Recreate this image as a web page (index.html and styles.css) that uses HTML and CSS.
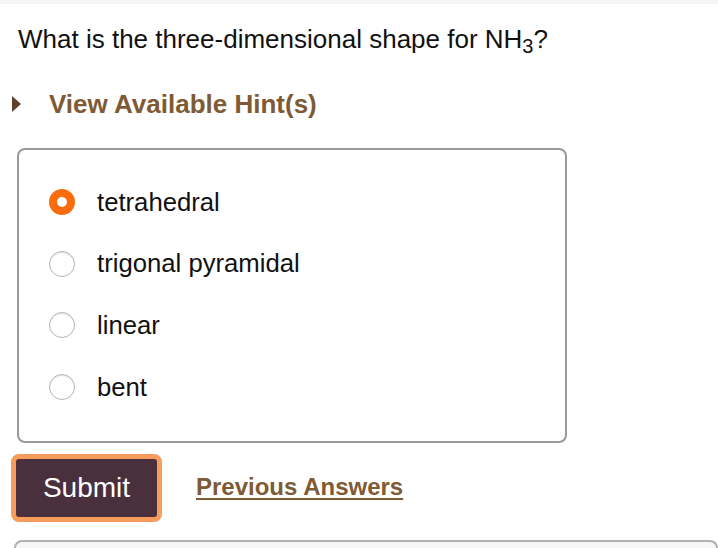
FILE: index.html
```html
<!DOCTYPE html>
<html>
<head>
<meta charset="utf-8">
<link rel="stylesheet" href="styles.css">
</head>
<body>
<div class="topbar"></div>
<main class="content">
  <p class="question">What is the three-dimensional shape for NH<sub>3</sub>?</p>
  <div class="hint">
    <svg class="hint-arrow" width="9" height="16" viewBox="0 0 9 16"><path d="M0 0 L9 8 L0 16 Z" fill="#5e4227"/></svg>
    <span class="hint-text">View Available Hint(s)</span>
  </div>
  <div class="choices">
    <label class="choice"><span class="radio checked"></span><span class="label">tetrahedral</span></label>
    <label class="choice"><span class="radio"></span><span class="label">trigonal pyramidal</span></label>
    <label class="choice"><span class="radio"></span><span class="label">linear</span></label>
    <label class="choice"><span class="radio"></span><span class="label">bent</span></label>
  </div>
  <div class="actions">
    <button class="submit">Submit</button>
    <a class="prev" href="#">Previous Answers</a>
  </div>
  <div class="next-box"></div>
</main>
</body>
</html>
```
FILE: styles.css
```css
html, body {
  margin: 0;
  padding: 0;
  background: #ffffff;
  font-family: "Liberation Sans", Arial, Helvetica, sans-serif;
  color: #111;
  overflow: hidden;
  height: 548px;
}
.topbar {
  height: 4px;
  background: #f4f4f4;
}
.content {
  padding: 0 0 0 17px;
}
.question {
  margin: 21px 0 0 1px;
  font-size: 26px;
  line-height: 28px;
}
.question sub {
  font-size: 20px;
  vertical-align: -5px;
  line-height: 0;
}
.hint {
  display: flex;
  align-items: center;
  margin: 37px 0 0 -5px;
  height: 28px;
}
.hint-arrow {
  display: block;
}
.hint-text {
  margin-left: 28px;
  font-weight: bold;
  font-size: 26px;
  color: #7e5a35;
}
.choices {
  margin-top: 30px;
  border: 2px solid #9a9a9a;
  border-radius: 8px;
  box-sizing: border-box;
  width: 550px;
  height: 295px;
  padding: 38px 0 0 30px;
  display: flex;
  flex-direction: column;
  gap: 33.7px;
}
.choice {
  display: flex;
  align-items: center;
  height: 28px;
}
.radio {
  width: 26px;
  height: 26px;
  border-radius: 50%;
  box-sizing: border-box;
  border: 1px solid #b5b5b5;
  background: radial-gradient(circle at 50% 60%, #ffffff 60%, #f0f0f0 100%);
  box-shadow: inset 0 1px 1px rgba(0,0,0,0.08);
  flex: none;
}
.radio.checked {
  border: 8px solid #fb6d0c;
  background: #ffffff;
  box-shadow: none;
}
.label {
  margin-left: 22px;
  font-size: 25.7px;
}
.actions {
  margin-top: 11px;
  margin-left: -6px;
  display: flex;
  align-items: center;
}
.submit {
  box-sizing: border-box;
  width: 151px;
  height: 68px;
  border: 5px solid #f79d5c;
  border-radius: 8px;
  background: #4a2f3d;
  color: #fff;
  font-family: "Liberation Sans", Arial, sans-serif;
  font-size: 28px;
  padding: 0;
}
.prev {
  margin-left: 34px;
  margin-top: -2px;
  font-size: 24px;
  font-weight: bold;
  color: #7e5a35;
  text-decoration: underline;
  text-underline-offset: 3px;
}
.next-box {
  margin: 18px 0 0 -3px;
  height: 6px;
  border: 2px solid #b0b0b0;
  border-bottom: none;
  border-radius: 8px 8px 0 0;
  background: #f6f6f6;
}
```
